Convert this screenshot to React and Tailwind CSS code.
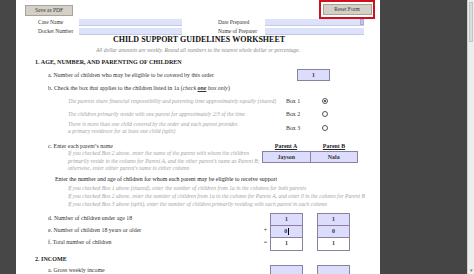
export default function App() {
  const gray = "text-[#a3a3a3] italic whitespace-nowrap text-[5.6px]";
  const Radio = ({ on }) => (
    <div className="w-[6px] h-[6px] rounded-full border border-[#555] bg-white flex items-center justify-center">
      {on && <div className="w-[2px] h-[2px] rounded-full bg-[#222]" />}
    </div>
  );
  const Cell = ({ v, fill, cursor }) => (
    <div className={`h-[12px] flex items-center justify-center font-bold ${fill ? "bg-[#dcdcfc]" : "bg-white"}`}>
      <span>{v}</span>
      {cursor && <span className="w-px h-[7px] bg-black ml-[0.5px]" />}
    </div>
  );
  return (
    <div className="w-[474px] h-[274px] overflow-hidden flex bg-[#454545] font-['Liberation_Serif',serif] text-[5.9px] leading-[7px] text-[#333] whitespace-nowrap">
      <div className="w-[16px] shrink-0 bg-[#474747]" />
      <div className="w-[364px] shrink-0 bg-white flex flex-col">
        {/* buttons */}
        <div className="h-[19px] shrink-0 flex items-start justify-between text-[5.5px]">
          <div className="ml-[9px] mt-[5px] w-[48px] h-[11px] bg-[#d4d0c8] border border-[#a8a49c] flex items-center justify-center text-[#333]">
            Save as PDF
          </div>
          <div className="mr-[5px] w-[56px] h-[19px] border-2 border-[#d0101c] flex items-center justify-center">
            <div className="w-[49px] h-[11px] bg-[#d4d0c8] border border-[#a8a49c] flex items-center justify-center">
              Reset Form
            </div>
          </div>
        </div>
        {/* case rows */}
        <div className="h-[9px] shrink-0 flex items-start text-[5.5px]">
          <span className="ml-[22px] w-[41px] leading-[7px]">Case Name</span>
          <div className="w-[103px] h-[7px] bg-[#dde1fa] border-b border-[#c3c7ea]" />
          <span className="ml-[36px] w-[47px] leading-[7px]">Date Prepared</span>
          <div className="w-[99px] h-[7px] bg-[#dde1fa] border-b border-[#c3c7ea] flex justify-end">
            <div className="w-[4px] h-[6px] bg-[#c5c8e8] border border-[#a8acd0]" />
          </div>
        </div>
        <div className="h-[8px] shrink-0 flex items-start text-[5.5px]">
          <span className="ml-[22px] w-[41px] leading-[7px]">Docket Number</span>
          <div className="w-[103px] h-[7px] bg-[#dde1fa] border-b border-[#c3c7ea]" />
          <span className="ml-[36px] w-[47px] leading-[7px]">Name of Preparer</span>
          <div className="w-[99px] h-[7px] bg-[#dde1fa] border-b border-[#c3c7ea]" />
        </div>
        <div className="h-[8px] shrink-0 flex items-center justify-center pl-[2px]">
          <span className="text-[8px] leading-[8px] font-bold text-[#111]">CHILD SUPPORT GUIDELINES WORKSHEET</span>
        </div>
        <div className="h-[12px] shrink-0 flex items-center justify-center text-[5.5px]">
          <span className="italic text-[#8a8a8a]">All dollar amounts are weekly. Round all numbers to the nearest whole dollar or percentage.</span>
        </div>
        <div className="h-[12px] shrink-0 flex items-center pl-[19px]">
          <span className="font-bold text-[#222] text-[6.1px]">1. AGE, NUMBER, AND PARENTING OF CHILDREN</span>
        </div>
        <div className="h-[14px] shrink-0 flex items-center pl-[32px]">
          <span className="w-[249px]">a. Number of children who may be eligible to be covered by this order</span>
          <div className="w-[33px] h-[12px] bg-[#dcdcfc] border border-[#8a80a0] flex items-center justify-center font-bold">1</div>
        </div>
        <div className="h-[12px] shrink-0 flex items-center pl-[32px]">
          <span>
            b. Check the box that applies to the children listed in 1a (<i>check <b className="underline">one</b> box only</i>)
          </span>
        </div>
        <div className="h-[14px] shrink-0 flex items-center pl-[52px]">
          <span className={gray + " w-[218px]"}>The parents share financial responsibility and parenting time approximately equally (shared)</span>
          <span className="w-[36px]">Box 1</span>
          <Radio on />
        </div>
        <div className="h-[12px] shrink-0 flex items-center pl-[52px]">
          <span className={gray + " w-[218px]"}>The children primarily reside with one parent for approximately 2/3 of the time</span>
          <span className="w-[36px]">Box 2</span>
          <Radio />
        </div>
        <div className="h-[16px] shrink-0 flex items-center pl-[52px]">
          <span className={gray + " w-[218px]"}>
            There is more than one child covered by the order and each parent provides<br />a primary residence for at least one child (split)
          </span>
          <span className="w-[36px]">Box 3</span>
          <Radio />
        </div>
        {/* c block */}
        <div className="shrink-0 flex pt-[6px]">
          <div className="flex-1 min-w-0 flex flex-col">
            <div className="h-[8px] flex items-center pl-[32px]">c. Enter each parent’s name</div>
            <div className={gray + " pl-[52px] leading-[7.5px]"}>
              <div>If you checked Box 2 above, enter the name of the parent with whom the children</div>
              <div>primarily reside in the column for Parent A, and the other parent’s name as Parent B;</div>
              <div>otherwise, enter either parent’s name in either column</div>
            </div>
          </div>
          <div className="w-[96px] shrink-0 mr-[22px] flex flex-col">
            <div className="h-[9px] flex items-center">
              <span className="w-[48px] text-center font-bold underline text-[#222]">Parent A</span>
              <span className="w-[48px] text-center font-bold underline text-[#222]">Parent B</span>
            </div>
            <div className="h-[12px] flex border border-[#8a80a0] bg-[#dcdcfc] font-bold">
              <div className="flex-1 flex items-center justify-center border-r border-[#8a80a0]">Jayson</div>
              <div className="flex-1 flex items-center justify-center">Nala</div>
            </div>
          </div>
        </div>
        <div className="h-[8px] mt-[3px] shrink-0 flex items-center pl-[39px] text-[#222]">
          Enter the number and age of children for whom each parent may be eligible to receive support
        </div>
        <div className={gray + " shrink-0 pl-[52px] leading-[8px] text-[5.5px]"}>
          <div>If you checked Box 1 above (shared), enter the number of children from 1a in the columns for both parents</div>
          <div>If you checked Box 2 above, enter the number of children from 1a in the column for Parent A, and enter 0 in the column for Parent B</div>
          <div>If you checked Box 3 above (split), enter the number of children primarily residing with each parent in each column</div>
        </div>
        {/* d e f */}
        <div className="mt-[5px] shrink-0 flex">
          <div className="w-[216px] pl-[32px] flex flex-col">
            <div className="h-[12px] flex items-center">d. Number of children under age 18</div>
            <div className="h-[12px] flex items-center">e. Number of children 18 years or older</div>
            <div className="h-[12px] flex items-center">f. Total number of children</div>
          </div>
          <div className="w-[38px] flex flex-col items-end pr-[3px]">
            <div className="h-[12px]" />
            <div className="h-[12px] flex items-center">+</div>
            <div className="h-[12px] flex items-center">=</div>
          </div>
          <div className="w-[33px] border border-[#8a80a0] divide-y divide-[#8a80a0]">
            <Cell v="1" fill />
            <Cell v="0" fill cursor />
            <Cell v="1" />
          </div>
          <div className="w-[14px]" />
          <div className="w-[33px] border border-[#8a80a0] divide-y divide-[#8a80a0]">
            <Cell v="1" fill />
            <Cell v="0" fill />
            <Cell v="1" />
          </div>
        </div>
        <div className="h-[10px] mt-[4px] shrink-0 flex items-center pl-[19px]">
          <span className="font-bold text-[#222] text-[6.1px]">2. INCOME</span>
        </div>
        <div className="shrink-0 flex">
          <div className="w-[254px] pl-[32px] h-[12px] flex items-center">a. Gross weekly income</div>
          <div className="w-[33px] h-[14px] bg-[#dcdcfc] border border-[#8a80a0]" />
          <div className="w-[14px]" />
          <div className="w-[33px] h-[14px] bg-[#dcdcfc] border border-[#8a80a0]" />
        </div>
      </div>
      <div className="flex-1 bg-[#454545]" />
      <div className="w-[7px] shrink-0 bg-[#ededed] border-l border-[#cfcfcf] flex flex-col justify-between">
        <div className="mt-[2px] mx-[1px] h-[40px] bg-[#dcdcdc] border border-[#c4c4c4]" />
        <div className="h-[7px] flex items-center justify-center text-[5px] leading-[5px] text-[#777]">▾</div>
      </div>
    </div>
  );
}
